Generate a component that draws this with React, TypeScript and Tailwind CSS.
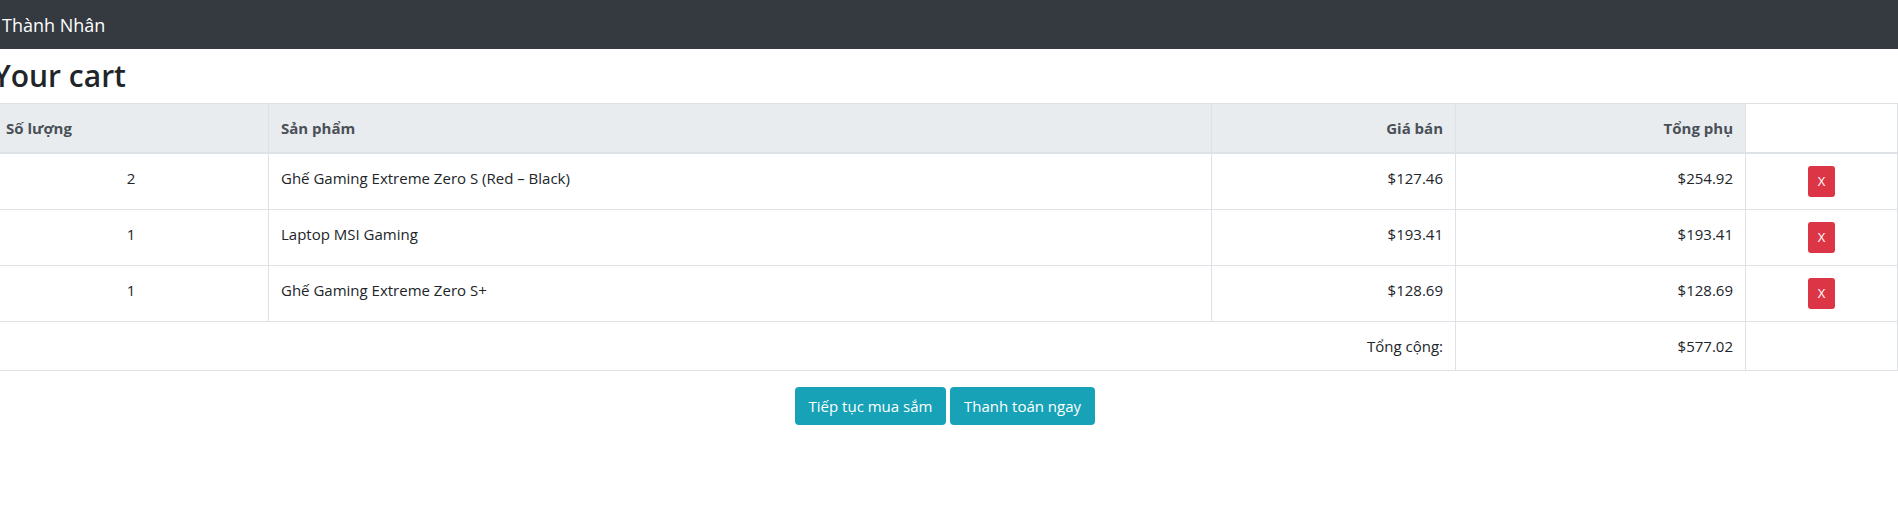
const items = [
  { qty: 2, name: "Ghế Gaming Extreme Zero S (Red – Black)", price: "$127.46", total: "$254.92" },
  { qty: 1, name: "Laptop MSI Gaming", price: "$193.41", total: "$193.41" },
  { qty: 1, name: "Ghế Gaming Extreme Zero S+", price: "$128.69", total: "$128.69" },
];

export default function App() {
  return (
    <div className="min-h-screen bg-white font-['Segoe_UI','Open_Sans',sans-serif] text-[15px] leading-6 text-[#212529]">
      <nav className="flex h-[49px] items-center bg-[#343a40] pl-[2px]">
        <span className="text-[18px] leading-[30px] text-white">Thành Nhân</span>
      </nav>

      <div className="ml-[-7px] w-[1904px]">
        <h2 className="mt-[8px] mb-[8px] text-[30px] font-semibold leading-[38px]">Your cart</h2>

        <table className="w-full table-fixed border-collapse">
          <colgroup>
            <col className="w-[275px]" />
            <col className="w-[943px]" />
            <col className="w-[244px]" />
            <col className="w-[290px]" />
            <col className="w-[152px]" />
          </colgroup>
          <thead>
            <tr className="text-[#495057]">
              <th className="border border-b-2 border-[#dee2e6] bg-[#e9ecef] p-3 text-left align-top font-bold">Số lượng</th>
              <th className="border border-b-2 border-[#dee2e6] bg-[#e9ecef] p-3 text-left align-top font-bold">Sản phẩm</th>
              <th className="border border-b-2 border-[#dee2e6] bg-[#e9ecef] p-3 text-right align-top font-bold">Giá bán</th>
              <th className="border border-b-2 border-[#dee2e6] bg-[#e9ecef] p-3 text-right align-top font-bold">Tổng phụ</th>
              <th className="border border-b-2 border-[#dee2e6] bg-white p-3"></th>
            </tr>
          </thead>
          <tbody>
            {items.map((it, i) => (
              <tr key={i}>
                <td className="border border-[#dee2e6] p-3 text-center align-top">{it.qty}</td>
                <td className="border border-[#dee2e6] p-3 text-left align-top">{it.name}</td>
                <td className="border border-[#dee2e6] p-3 text-right align-top">{it.price}</td>
                <td className="border border-[#dee2e6] p-3 text-right align-top">{it.total}</td>
                <td className="border border-[#dee2e6] p-3 text-center align-top">
                  <button className="h-[31px] w-[27px] rounded-[3px] bg-[#dc3545] text-[13px] leading-[21px] text-white">
                    X
                  </button>
                </td>
              </tr>
            ))}
            <tr>
              <td colSpan={3} className="border border-[#dee2e6] p-3 text-right align-top">
                Tổng cộng:
              </td>
              <td className="border border-[#dee2e6] p-3 text-right align-top">$577.02</td>
              <td className="border border-[#dee2e6] p-3"></td>
            </tr>
          </tbody>
        </table>

        <div className="mt-4 flex justify-center gap-1">
          <button className="h-[38px] w-[151px] rounded-[4px] bg-[#17a2b8] text-[15px] text-white">
            Tiếp tục mua sắm
          </button>
          <button className="h-[38px] w-[145px] rounded-[4px] bg-[#17a2b8] text-[15px] text-white">
            Thanh toán ngay
          </button>
        </div>
      </div>
    </div>
  );
}
